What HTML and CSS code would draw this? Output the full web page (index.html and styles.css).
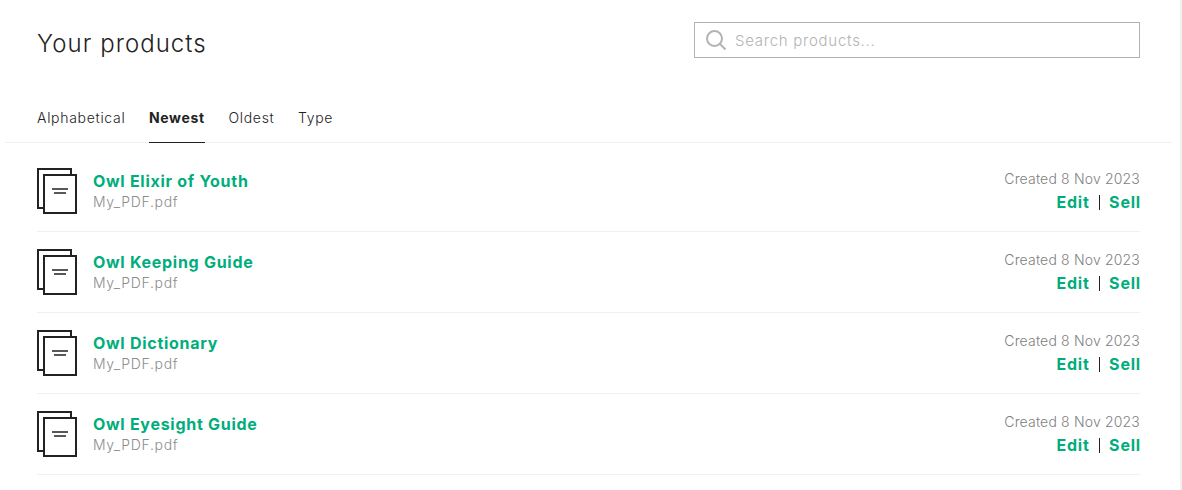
FILE: index.html
```html
<!DOCTYPE html>
<html lang="en">
<head>
  <meta charset="UTF-8" />
  <title>Your products</title>
  <link rel="stylesheet" href="styles.css">
</head>
<body>
  <section class="products-page">
    <div class="top-bar">
      <h1>Your products</h1>
      <div class="search-box">
        <svg class="search-icon" viewBox="0 0 22 22" width="22" height="22">
          <circle cx="9.5" cy="9.5" r="7.5" fill="none" stroke="#b3b3b3" stroke-width="2"/>
          <path d="M15 15l5.5 5.5" fill="none" stroke="#b3b3b3" stroke-width="2"/>
        </svg>
        <input type="text" placeholder="Search products...">
      </div>
    </div>

    <div class="tabs">
      <a class="tab">Alphabetical</a>
      <a class="tab active">Newest</a>
      <a class="tab">Oldest</a>
      <a class="tab">Type</a>
    </div>

    <ul class="product-list">
      <li class="product">
        <svg class="doc-icon" viewBox="0 0 40 46" width="40" height="46">
          <path d="M7 40H1V1h33v6" fill="none" stroke="#222" stroke-width="2"/>
          <rect x="7" y="7" width="32" height="38" fill="#fff" stroke="#222" stroke-width="2"/>
          <path d="M15 21h16M17 25h12" fill="none" stroke="#222" stroke-width="1.5"/>
        </svg>
        <div class="product-info">
          <a class="product-name">Owl Elixir of Youth</a>
          <p class="file-name">My_PDF.pdf</p>
        </div>
        <div class="product-meta">
          <p class="created">Created 8 Nov 2023</p>
          <p class="actions"><a>Edit</a><span class="sep"></span><a>Sell</a></p>
        </div>
      </li>
      <li class="product">
        <svg class="doc-icon" viewBox="0 0 40 46" width="40" height="46">
          <path d="M7 40H1V1h33v6" fill="none" stroke="#222" stroke-width="2"/>
          <rect x="7" y="7" width="32" height="38" fill="#fff" stroke="#222" stroke-width="2"/>
          <path d="M15 21h16M17 25h12" fill="none" stroke="#222" stroke-width="1.5"/>
        </svg>
        <div class="product-info">
          <a class="product-name">Owl Keeping Guide</a>
          <p class="file-name">My_PDF.pdf</p>
        </div>
        <div class="product-meta">
          <p class="created">Created 8 Nov 2023</p>
          <p class="actions"><a>Edit</a><span class="sep"></span><a>Sell</a></p>
        </div>
      </li>
      <li class="product">
        <svg class="doc-icon" viewBox="0 0 40 46" width="40" height="46">
          <path d="M7 40H1V1h33v6" fill="none" stroke="#222" stroke-width="2"/>
          <rect x="7" y="7" width="32" height="38" fill="#fff" stroke="#222" stroke-width="2"/>
          <path d="M15 21h16M17 25h12" fill="none" stroke="#222" stroke-width="1.5"/>
        </svg>
        <div class="product-info">
          <a class="product-name">Owl Dictionary</a>
          <p class="file-name">My_PDF.pdf</p>
        </div>
        <div class="product-meta">
          <p class="created">Created 8 Nov 2023</p>
          <p class="actions"><a>Edit</a><span class="sep"></span><a>Sell</a></p>
        </div>
      </li>
      <li class="product">
        <svg class="doc-icon" viewBox="0 0 40 46" width="40" height="46">
          <path d="M7 40H1V1h33v6" fill="none" stroke="#222" stroke-width="2"/>
          <rect x="7" y="7" width="32" height="38" fill="#fff" stroke="#222" stroke-width="2"/>
          <path d="M15 21h16M17 25h12" fill="none" stroke="#222" stroke-width="1.5"/>
        </svg>
        <div class="product-info">
          <a class="product-name">Owl Eyesight Guide</a>
          <p class="file-name">My_PDF.pdf</p>
        </div>
        <div class="product-meta">
          <p class="created">Created 8 Nov 2023</p>
          <p class="actions"><a>Edit</a><span class="sep"></span><a>Sell</a></p>
        </div>
      </li>
    </ul>
  </section>
</body>
</html>
```
FILE: styles.css
```css
* {
  box-sizing: border-box;
  margin: 0;
  padding: 0;
}

body {
  font-family: Inter, 'Noto Sans', sans-serif;
  background: #fff;
  color: #222;
  height: 490px;
  overflow: hidden;
}

.products-page {
  width: 1182px;
  height: 490px;
  padding-left: 5px;
  border-right: 2px solid #f0f0f0;
}

.top-bar {
  display: flex;
  justify-content: space-between;
  align-items: flex-start;
  height: 100px;
  padding: 22px 40px 0 32px;
}

h1 {
  font-size: 24px;
  font-weight: 300;
  line-height: 44px;
  letter-spacing: 1.05px;
}

.search-box {
  display: flex;
  align-items: center;
  gap: 8px;
  width: 446px;
  height: 36px;
  padding-left: 10px;
  border: 1px solid #b3b3b3;
}

.search-box input {
  flex: 1;
  border: none;
  outline: none;
  font-family: inherit;
  font-size: 15px;
  font-weight: 300;
  letter-spacing: 0.74px;
}

.search-box input::placeholder {
  color: #b3b3b3;
}

.tabs {
  display: flex;
  gap: 23.5px;
  height: 43px;
  margin-right: 8px;
  padding-left: 32px;
  border-bottom: 1px solid #f0f0f0;
}

.tab {
  height: 43px;
  padding-top: 9px;
  font-size: 14px;
  font-weight: 300;
  letter-spacing: 0.7px;
}

.tab.active {
  font-weight: 700;
  border-bottom: 1px solid #222;
}

.product-list {
  list-style: none;
  margin: 0 40px 0 32px;
  padding-top: 8px;
}

.product {
  display: flex;
  align-items: center;
  height: 81px;
  border-bottom: 1px solid #f0f0f0;
}

.doc-icon {
  flex-shrink: 0;
  margin-right: 16px;
}

.product-info {
  flex: 1;
}

.product-name {
  display: block;
  color: #00ad7c;
  font-size: 16px;
  font-weight: 700;
  line-height: 22px;
  letter-spacing: 0.72px;
}

.file-name {
  color: #8c8c8c;
  font-size: 14px;
  font-weight: 300;
  line-height: 20px;
  letter-spacing: 0.7px;
}

.product-meta {
  margin-top: 2px;
  text-align: right;
}

.created {
  color: #808080;
  font-size: 14px;
  font-weight: 300;
  line-height: 20px;
  letter-spacing: 0.17px;
}

.actions {
  display: flex;
  justify-content: flex-end;
  align-items: center;
  height: 26px;
  margin-right: -1px;
  color: #00ad7c;
  font-size: 16px;
  font-weight: 700;
  letter-spacing: 0.8px;
}

.sep {
  width: 1px;
  height: 15px;
  margin: 0 9px 0 9.5px;
  background: #222;
}
```
